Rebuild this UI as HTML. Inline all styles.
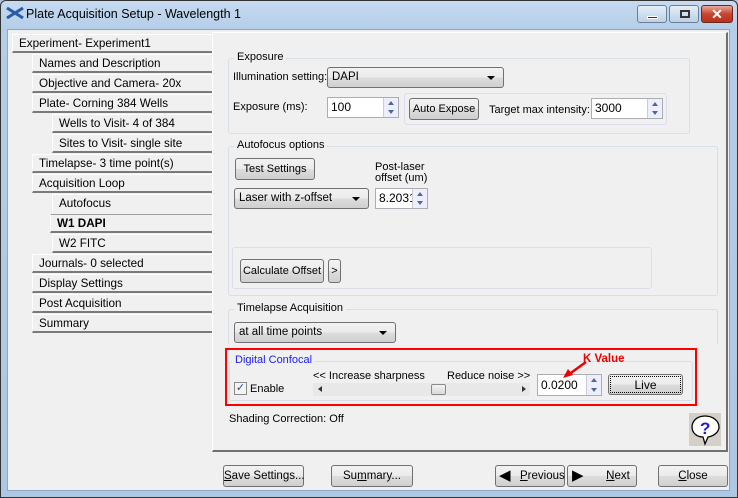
<!DOCTYPE html>
<html><head><style>
*{box-sizing:border-box;margin:0;padding:0}
body{width:738px;height:498px;overflow:hidden;background:#a9c4e0;font-family:"Liberation Sans",sans-serif;font-size:11px;color:#000;position:relative}
div{white-space:nowrap}
.a{position:absolute}
.win{position:absolute;left:0;top:0;width:738px;height:498px;background:linear-gradient(#c6daf0,#b4cde8 30px,#adc8e4);border:1px solid #333;border-radius:6px 6px 0 0}
.client{position:absolute;left:7px;top:29px;width:723px;height:462px;background:#f0f0f0;border:1px solid #8ea8c4}
.nav{position:absolute;height:19px;border-bottom:2px solid #7a7a7a;border-left:1px solid #fff;border-top:1px solid #fff;padding:2px 0 0 6px;font-size:11.7px;background:#f0f0f0;right:0}
.grp{position:absolute;border:1px solid #d5dfe5;border-radius:3px}
.gl{position:absolute;background:#f0f0f0;padding:0 3px;top:-8px;left:5px}
.btn{position:absolute;border:1px solid #707070;border-radius:3px;background:linear-gradient(#f2f2f2,#ebebeb 50%,#dddddd 51%,#cfcfcf);text-align:center;font-size:11px}
.inp{position:absolute;background:#fff;border:1px solid #abadb3;padding:2px 3px;overflow:hidden}
.spin{position:absolute;right:0;top:0;width:15px;height:100%;border-left:1px solid #ccc;background:#eef}
.spin:before{content:"";position:absolute;left:4px;top:3px;border:3px solid transparent;border-bottom:4px solid #4a6a9a;border-top:0}
.spin:after{content:"";position:absolute;left:4px;bottom:3px;border:3px solid transparent;border-top:4px solid #4a6a9a;border-bottom:0}
.dd{position:absolute;border:1px solid #707070;border-radius:3px;background:linear-gradient(#f2f2f2,#ebebeb 50%,#dddddd 51%,#cfcfcf);padding:3px 4px;font-size:11.5px}
.dd:after{content:"";position:absolute;right:8px;top:8px;border:4px solid transparent;border-top:4px solid #000;border-bottom:0}
u{text-decoration:underline}
</style></head><body>
<div class="win"></div>
<svg class="a" style="left:6px;top:6px" width="18" height="14"><path d="M1 2 L17 12 M17 2 L1 12" stroke="#2a5ba8" stroke-width="3"/></svg>
<div class="a" style="left:26px;top:7px;font-size:12.5px;color:#000">Plate Acquisition Setup - Wavelength 1</div>
<div class="a" style="left:637px;top:5px;width:30px;height:18px;border:1px solid #6a7f99;border-radius:3px;background:linear-gradient(#e4eef8,#bcd0e6)"><div class="a" style="left:9px;top:10px;width:11px;height:3px;background:#333;border:1px solid #fff"></div></div>
<div class="a" style="left:669px;top:5px;width:30px;height:18px;border:1px solid #6a7f99;border-radius:3px;background:linear-gradient(#e4eef8,#bcd0e6)"><div class="a" style="left:10px;top:4px;width:10px;height:8px;border:2px solid #333"></div></div>
<div class="a" style="left:701px;top:5px;width:32px;height:18px;border:1px solid #6b2a20;border-radius:3px;background:linear-gradient(#e9a99a,#c8452f 50%,#b8321c);color:#fff;font-weight:bold;text-align:center;font-size:14px;line-height:16px">✕</div>
<div class="client"></div>

<div class="a" style="left:12px;top:34px;width:200px;height:300px">
<div class="nav" style="left:0;top:0">Experiment- Experiment1</div>
<div class="nav" style="left:20px;top:20px">Names and Description</div>
<div class="nav" style="left:20px;top:40px">Objective and Camera- 20x</div>
<div class="nav" style="left:20px;top:60px">Plate- Corning 384 Wells</div>
<div class="nav" style="left:40px;top:80px">Wells to Visit- 4 of 384</div>
<div class="nav" style="left:40px;top:100px">Sites to Visit- single site</div>
<div class="nav" style="left:20px;top:120px">Timelapse- 3 time point(s)</div>
<div class="nav" style="left:20px;top:140px">Acquisition Loop</div>
<div class="nav" style="left:40px;top:160px;border-bottom-color:#f0f0f0">Autofocus</div>
<div class="nav" style="left:38px;top:180px;font-weight:bold;border-top:1px solid #a0a0a0">W1 DAPI</div>
<div class="nav" style="left:40px;top:200px">W2 FITC</div>
<div class="nav" style="left:20px;top:220px">Journals- 0 selected</div>
<div class="nav" style="left:20px;top:240px">Display Settings</div>
<div class="nav" style="left:20px;top:260px">Post Acquisition</div>
<div class="nav" style="left:20px;top:280px">Summary</div>
</div>
<div class="a" style="left:212px;top:32px;width:516px;height:420px;border-top:1px solid #fff;border-left:1px solid #fff;border-right:2px solid #707070;border-bottom:2px solid #707070"></div>

<div class="grp" style="left:228px;top:58px;width:462px;height:76px"><div class="gl">Exposure</div></div>
<div class="a" style="left:233px;top:71px">Illumination setting:</div>
<div class="dd" style="left:327px;top:67px;width:177px;height:21px">DAPI</div>
<div class="a" style="left:233px;top:101px">Exposure (ms):</div>
<div class="inp" style="left:327px;top:97px;width:72px;height:21px;font-size:12px">100<div class="spin"></div></div>
<div class="grp" style="left:404px;top:93px;width:263px;height:32px;border-color:#dde"></div>
<div class="btn" style="left:409px;top:98px;width:70px;height:22px;padding-top:4px">Auto Expose</div>
<div class="a" style="left:489px;top:104px">Target max intensity:</div>
<div class="inp" style="left:591px;top:98px;width:72px;height:21px;font-size:12px">3000<div class="spin"></div></div>

<div class="grp" style="left:228px;top:146px;width:490px;height:150px"><div class="gl">Autofocus options</div></div>
<div class="btn" style="left:235px;top:158px;width:80px;height:22px;padding-top:4px">Test Settings</div>
<div class="a" style="left:375px;top:162px;line-height:11px">Post-laser<br>offset (um)</div>
<div class="dd" style="left:234px;top:188px;width:135px;height:21px">Laser with z-offset</div>
<div class="inp" style="left:375px;top:188px;width:53px;height:21px;font-size:12px">8.20313<div class="spin"></div></div>
<div class="grp" style="left:232px;top:247px;width:420px;height:42px;border-color:#dde"></div>
<div class="btn" style="left:240px;top:259px;width:84px;height:24px;padding-top:5px">Calculate Offset</div>
<div class="btn" style="left:328px;top:259px;width:13px;height:24px;padding-top:5px">&gt;</div>

<div class="grp" style="left:228px;top:309px;width:490px;height:36px;border-bottom:0"><div class="gl">Timelapse Acquisition</div></div>
<div class="dd" style="left:234px;top:322px;width:162px;height:21px">at all time points</div>

<div class="a" style="left:225px;top:348px;width:472px;height:58px;border:2px solid #f00"></div>
<div class="grp" style="left:229px;top:361px;width:464px;height:40px"><div class="gl" style="color:#1a1aff;left:2px">Digital Confocal</div></div>
<div class="a" style="left:234px;top:382px;width:13px;height:13px;border:1px solid #8a8a8a;background:#f4f4f4;color:#2a4a90;font-size:11px;line-height:11px;text-align:center">✓</div>
<div class="a" style="left:250px;top:383px">Enable</div>
<div class="a" style="left:313px;top:370px">&lt;&lt; Increase sharpness</div>
<div class="a" style="left:447px;top:370px">Reduce noise &gt;&gt;</div>
<div class="a" style="left:313px;top:383px;width:217px;height:13px;background:#e8e8e8"></div>
<div class="a" style="left:318px;top:386px;border:3px solid transparent;border-right:4px solid #333;border-left:0"></div>
<div class="a" style="left:522px;top:386px;border:3px solid transparent;border-left:4px solid #333;border-right:0"></div>
<div class="a" style="left:431px;top:384px;width:15px;height:11px;border:1px solid #8a8a8a;border-radius:2px;background:linear-gradient(#f4f4f4,#d8d8d8)"></div>
<div class="inp" style="left:537px;top:374px;width:65px;height:22px;font-size:12px;padding-top:3px">0.0200<div class="spin"></div></div>
<div class="btn" style="left:608px;top:374px;width:75px;height:21px;padding-top:3px;outline:1px dotted #000;outline-offset:-3px;font-size:12px">Live</div>
<div class="a" style="left:583px;top:353px;color:#e00;font-weight:bold;font-size:11.5px">K Value</div>
<svg class="a" style="left:560px;top:360px" width="30" height="20"><path d="M26 2 L8 15" stroke="#e00" stroke-width="2.5"/><path d="M3 18 L13 15 L8 9 Z" fill="#e00"/></svg>

<div class="a" style="left:229px;top:413px">Shading Correction: Off</div>
<div class="a" style="left:689px;top:413px;width:32px;height:33px;background:#d4d0c8"></div>
<svg class="a" style="left:689px;top:413px" width="32" height="33"><path d="M16 3 C8 3 3 8 3 14 C3 20 8 24 14 24 L16 31 L19 24 C25 23 30 19 30 14 C30 8 24 3 16 3 Z" fill="#fff" stroke="#000" stroke-width="1.3"/><text x="11" y="21" font-family="Liberation Sans" font-weight="bold" font-size="17" fill="#1a1aee">?</text></svg>

<div class="btn" style="left:223px;top:465px;width:81px;height:22px;padding-top:4px;font-size:11.5px"><u>S</u>ave Settings...</div>
<div class="btn" style="left:331px;top:465px;width:82px;height:22px;padding-top:4px;font-size:11.5px">Su<u>m</u>mary...</div>
<div class="btn" style="left:495px;top:465px;width:70px;height:22px;padding:4px 0 0 24px;font-size:11.5px"><u>P</u>revious</div>
<div class="a" style="left:499px;top:466px;font-size:15px">◀</div>
<div class="btn" style="left:567px;top:465px;width:70px;height:22px;padding:4px 0 0 32px;font-size:11.5px"><u>N</u>ext</div>
<div class="a" style="left:572px;top:466px;font-size:15px">▶</div>
<div class="btn" style="left:658px;top:465px;width:70px;height:22px;padding-top:4px;font-size:11.5px"><u>C</u>lose</div>
</body></html>
